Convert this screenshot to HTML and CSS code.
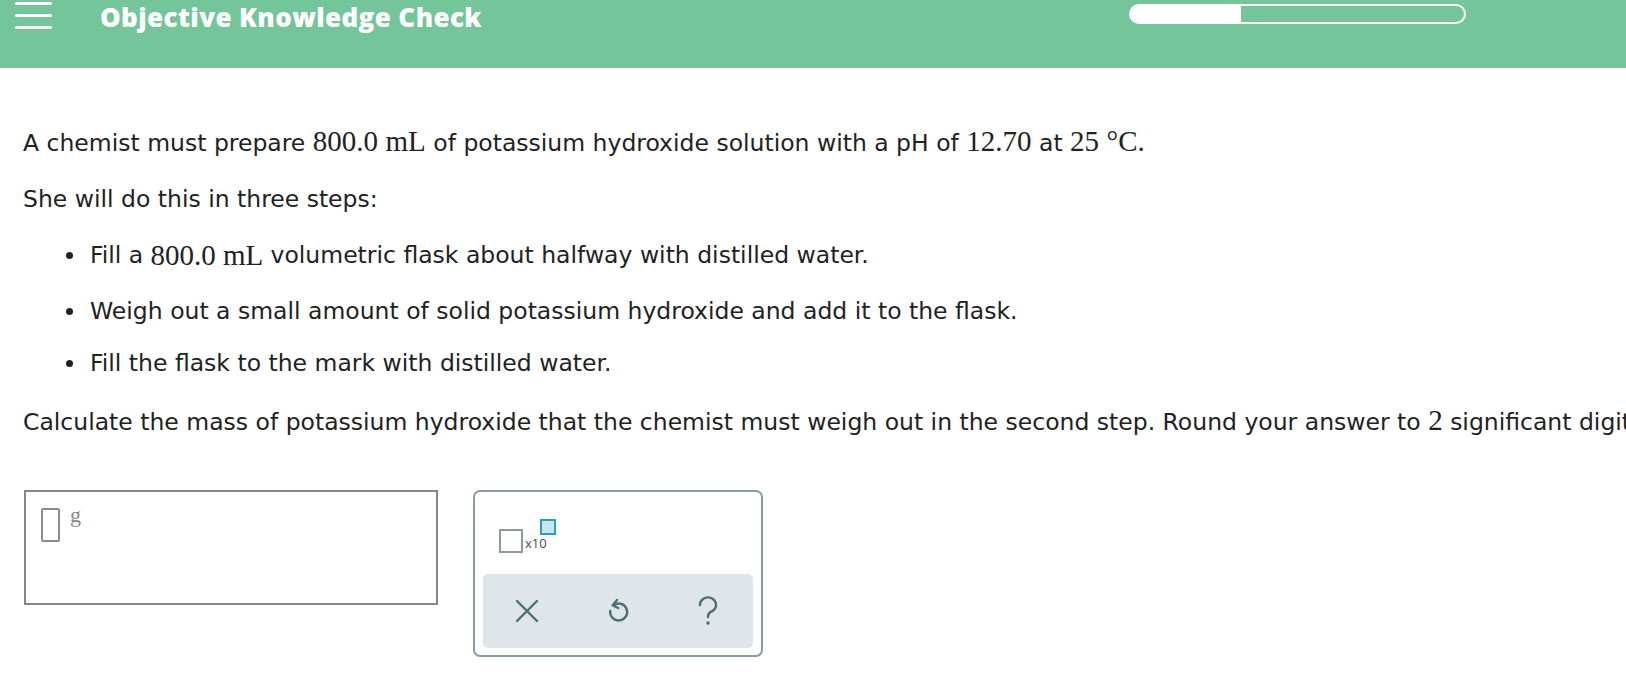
FILE: index.html
```html
<!DOCTYPE html>
<html>
<head>
<meta charset="utf-8">
<link rel="stylesheet" href="styles.css">
</head>
<body>
<header class="topbar">
  <div class="menu"><span></span><span></span><span></span></div>
  <h1 class="title">Objective Knowledge Check</h1>
  <div class="progress"><div class="progress-fill" style="width:33%"></div></div>
</header>
<main class="content">
  <p class="line tall">A chemist must prepare <span class="m">800.0</span> <span class="m">mL</span> of potassium hydroxide solution with a pH of <span class="m">12.70</span> at <span class="m">25</span> <span class="m">°C.</span></p>
  <p class="line">She will do this in three steps:</p>
  <ul class="steps">
    <li class="line tall">Fill a <span class="m">800.0</span> <span class="m">mL</span> volumetric flask about halfway with distilled water.</li>
    <li class="line">Weigh out a small amount of solid potassium hydroxide and add it to the flask.</li>
    <li class="line">Fill the flask to the mark with distilled water.</li>
  </ul>
  <p class="line tall nowrap">Calculate the mass of potassium hydroxide that the chemist must weigh out in the second step. Round your answer to <span class="m">2</span> significant digits.</p>
  <div class="answer-row">
    <div class="answer">
      <span class="slot"></span><span class="unit">g</span>
    </div>
    <div class="tools">
      <div class="tool-top">
        <div class="sci">
          <span class="sci-base"></span><span class="sci-x">x10</span><span class="sci-exp"></span>
        </div>
      </div>
      <div class="tool-bar">
        <svg class="ico" width="26" height="26" viewBox="0 0 26 26"><path d="M3 3 L23 23 M23 3 L3 23" fill="none" stroke="#4c6f76" stroke-width="2.4" stroke-linecap="round"/></svg>
        <svg class="ico" width="26" height="28" viewBox="0 0 26 28"><path d="M8.5 8.2 A8.5 8.5 0 1 1 5.2 14" fill="none" stroke="#4c6f76" stroke-width="2.4" stroke-linecap="round"/><path d="M12 3 L7.6 8.2 L13.2 11" fill="none" stroke="#4c6f76" stroke-width="2.4" stroke-linecap="round" stroke-linejoin="round"/></svg>
        <svg class="ico" width="24" height="30" viewBox="0 0 24 30"><path d="M4 9 A8 7.5 0 1 1 14.5 16 C12.5 17.3 12 18.5 12 21" fill="none" stroke="#4c6f76" stroke-width="2.4" stroke-linecap="round"/><circle cx="12" cy="27" r="1.7" fill="#4c6f76"/></svg>
      </div>
    </div>
  </div>
</main>
</body>
</html>
```

FILE: styles.css
```css
html, body {
  margin: 0;
  padding: 0;
  background: #fff;
  overflow: hidden;
}
body {
  width: 1626px;
  height: 689px;
  font-family: "DejaVu Sans", Verdana, sans-serif;
  color: #222;
}
.topbar {
  height: 68px;
  background: #74c69a;
  display: flex;
  align-items: flex-start;
}
.menu {
  margin-left: 15px;
  margin-top: 2px;
  width: 37px;
  display: flex;
  flex-direction: column;
  gap: 9px;
}
.menu span {
  display: block;
  height: 3px;
  border-radius: 2px;
  background: #fff;
}
.title {
  margin: 0 0 0 48px;
  font-family: "Open Sans", sans-serif;
  font-weight: 800;
  font-size: 26px;
  line-height: 34px;
  color: #fff;
  letter-spacing: 0.4px;
}
.progress {
  margin-left: auto;
  margin-right: 160px;
  margin-top: 4px;
  width: 333px;
  height: 16px;
  border: 2px solid #fff;
  border-radius: 10px;
  overflow: hidden;
}
.progress-fill {
  height: 100%;
  background: #fff;
}
.content {
  padding-left: 23px;
  padding-top: 55px;
}
.line {
  margin: 0;
  font-size: 23.5px;
  line-height: 28px;
  white-space: nowrap;
}
.line.tall {
  line-height: 36px;
}
.content > p + p,
.content > p + .steps {
  margin-top: 24px;
}
.m {
  font-family: "Liberation Serif", "Times New Roman", serif;
  font-size: 29px;
}
.steps {
  list-style: none;
  margin: 31px 0 25px;
  padding-left: 43px;
}
.steps li {
  display: flex;
  align-items: center;
}
.steps li + li {
  margin-top: 24px;
}
.steps li::before {
  content: "";
  width: 7px;
  height: 7px;
  border-radius: 50%;
  background: #222;
  margin-right: 17px;
  flex: none;
}
.steps li .m {
  margin: 0 0.25em;
}
.steps li .m + .m {
  margin-left: 0;
}
.answer-row {
  display: flex;
  align-items: flex-start;
  margin-top: 50px;
  margin-left: 1px;
  gap: 35px;
}
.answer {
  width: 410px;
  height: 111px;
  border: 2px solid #878787;
  display: flex;
  align-items: flex-start;
}
.slot {
  margin-left: 15px;
  margin-top: 16px;
  width: 15px;
  height: 30px;
  border: 2px solid #8c8c8c;
  border-radius: 2px;
}
.unit {
  margin-left: 10px;
  margin-top: 10px;
  font-family: "Liberation Serif", serif;
  font-size: 22px;
  color: #888;
}
.tools {
  width: 286px;
  height: 163px;
  border: 2px solid #8a9ea2;
  border-radius: 7px;
  display: flex;
  flex-direction: column;
}
.tool-top {
  height: 82px;
  position: relative;
}
.sci {
  position: absolute;
  left: 24px;
  top: 27px;
  width: 60px;
  height: 36px;
}
.sci-base {
  position: absolute;
  left: 0;
  top: 10px;
  width: 20px;
  height: 20px;
  border: 2px solid #8a9a9e;
  background: #fff;
}
.sci-x {
  position: absolute;
  left: 26px;
  top: 15px;
  font-family: "Open Sans", sans-serif;
  font-size: 13px;
  line-height: 18px;
  color: #4a4a4a;
}
.sci-exp {
  position: absolute;
  left: 41px;
  top: 0;
  width: 12px;
  height: 12px;
  border: 2px solid #2ba0b4;
  background: #c9e6ee;
}
.tool-bar {
  margin: 0 8px;
  height: 74px;
  background: #dfe6e9;
  border-radius: 5px;
  display: flex;
  align-items: center;
  justify-content: space-between;
  padding: 0 33px 0 31px;
}
.ico {
  display: block;
}
```
